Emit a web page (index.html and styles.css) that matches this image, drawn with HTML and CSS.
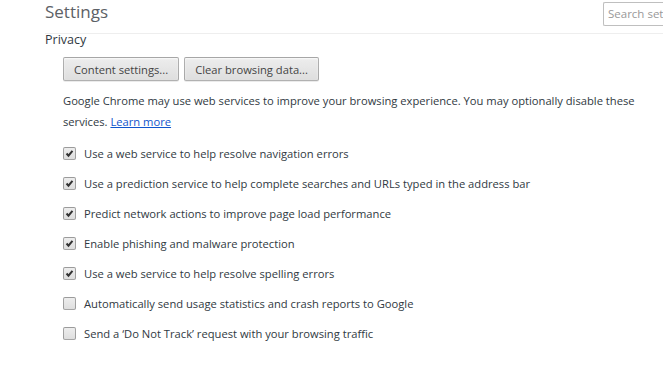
FILE: index.html
```html
<!DOCTYPE html>
<html>
<head>
<meta charset="utf-8">
<link rel="stylesheet" href="styles.css">
</head>
<body>
<div class="page">
  <header class="top">
    <h1 class="title">Settings</h1>
    <div class="search">Search settings</div>
  </header>
  <section class="section">
    <h3 class="section-title">Privacy</h3>
    <div class="section-body">
      <div class="buttons">
        <button class="btn">Content settings...</button>
        <button class="btn">Clear browsing data...</button>
      </div>
      <p class="desc">Google Chrome may use web services to improve your browsing experience. You may optionally disable these services. <a class="link" href="#">Learn more</a></p>
      <ul class="opts">
        <li class="opt"><span class="cb on"><svg viewBox="0 0 13 13" class="tick"><path d="M3 6.5 L5.3 9 L10 3.5" /></svg></span>Use a web service to help resolve navigation errors</li>
        <li class="opt"><span class="cb on"><svg viewBox="0 0 13 13" class="tick"><path d="M3 6.5 L5.3 9 L10 3.5" /></svg></span>Use a prediction service to help complete searches and URLs typed in the address bar</li>
        <li class="opt"><span class="cb on"><svg viewBox="0 0 13 13" class="tick"><path d="M3 6.5 L5.3 9 L10 3.5" /></svg></span>Predict network actions to improve page load performance</li>
        <li class="opt"><span class="cb on"><svg viewBox="0 0 13 13" class="tick"><path d="M3 6.5 L5.3 9 L10 3.5" /></svg></span>Enable phishing and malware protection</li>
        <li class="opt"><span class="cb on"><svg viewBox="0 0 13 13" class="tick"><path d="M3 6.5 L5.3 9 L10 3.5" /></svg></span>Use a web service to help resolve spelling errors</li>
        <li class="opt"><span class="cb"></span>Automatically send usage statistics and crash reports to Google</li>
        <li class="opt"><span class="cb"></span>Send a ‘Do Not Track’ request with your browsing traffic</li>
      </ul>
    </div>
  </section>
</div>
</body>
</html>
```
FILE: styles.css
```css
* { box-sizing: border-box; }
html, body { margin: 0; padding: 0; background: #fff; }
body {
  font-family: "Open Sans", "Noto Sans", sans-serif;
  font-size: 11.2px;
  color: #303942;
  overflow: hidden;
  width: 663px;
  height: 370px;
}
.page { padding-left: 45px; }
.top {
  display: flex;
  justify-content: space-between;
  align-items: flex-start;
  border-bottom: 1px solid #eeeeee;
  height: 34px;
  padding-top: 0;
}
.title {
  margin: 0;
  font-weight: normal;
  font-size: 17px;
  line-height: 24px;
  color: #5c6166;
}
.search {
  margin-top: 2px;
  width: 60px;
  height: 24px;
  border: 1px solid #bfbfbf;
  border-right: none;
  border-radius: 2px 0 0 2px;
  color: #999;
  font-size: 11.5px;
  line-height: 22px;
  padding-left: 4px;
  white-space: nowrap;
  overflow: hidden;
}
.section-title {
  margin: 0;
  font-weight: normal;
  font-size: 12.5px;
  line-height: 12px;
  color: #303942;
}
.section-body { padding-left: 18px; padding-top: 11px; }
.buttons { display: flex; gap: 5px; }
.btn {
  font: inherit;
  color: #444;
  height: 24px;
  padding: 0 10px;
  border: 1px solid rgba(0,0,0,0.25);
  border-radius: 2px;
  background: linear-gradient(#ededed, #dedede);
  box-shadow: 0 1px 0 rgba(0,0,0,0.08), inset 0 1px 2px rgba(255,255,255,0.75);
}
.desc {
  margin: 9px 0 0;
  line-height: 21px;
  width: 590px;
}
.link { color: #15c; }
.opts { list-style: none; margin: 6px 0 0; padding: 0; }
.opt {
  display: flex;
  align-items: center;
  height: 30px;
}
.cb {
  width: 13px;
  height: 13px;
  border: 1px solid rgba(0,0,0,0.3);
  border-radius: 2px;
  background: linear-gradient(#ededed, #dedede);
  margin-right: 8px;
  flex: none;
  display: flex;
}
.tick { width: 11px; height: 11px; }
.tick path { fill: none; stroke: #333; stroke-width: 2.4; }
```
